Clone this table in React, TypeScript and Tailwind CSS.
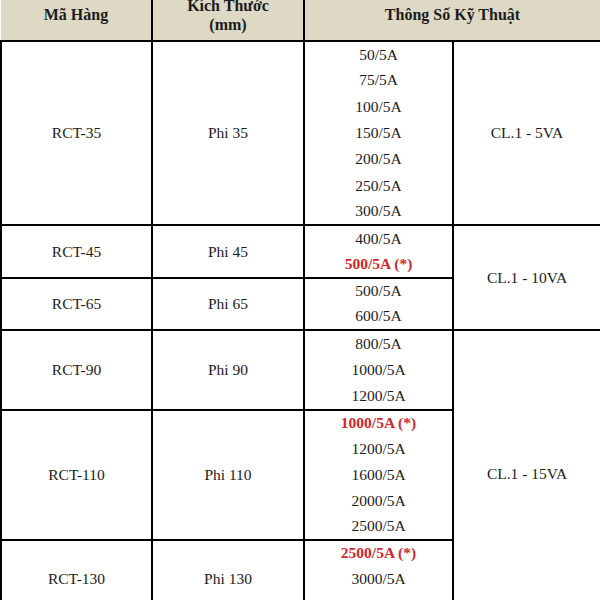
const groups = [
  { code: "RCT-35", size: "Phi 35", row: "h-[26.29px]", specs: ["50/5A", "75/5A", "100/5A", "150/5A", "200/5A", "250/5A", "300/5A"] },
  { code: "RCT-45", size: "Phi 45", row: "h-[26.5px]", specs: ["400/5A", "500/5A (*)"] },
  { code: "RCT-65", size: "Phi 65", row: "h-[26px]", specs: ["500/5A", "600/5A"] },
  { code: "RCT-90", size: "Phi 90", row: "h-[26.67px]", specs: ["800/5A", "1000/5A", "1200/5A"] },
  { code: "RCT-110", size: "Phi 110", row: "h-[26px]", specs: ["1000/5A (*)", "1200/5A", "1600/5A", "2000/5A", "2500/5A"] },
  { code: "RCT-130", size: "Phi 130", row: "h-[26px]", specs: ["2500/5A (*)", "3000/5A", "4000/5A"] },
];

// class groups start at group index -> label + number of product groups covered
const classes: Record<number, { label: string; count: number }> = {
  0: { label: "CL.1 - 5VA", count: 1 },
  1: { label: "CL.1 - 10VA", count: 2 },
  3: { label: "CL.1 - 15VA", count: 3 },
};

const cell = "border-x-2 border-black text-center align-middle";

export default function App() {
  return (
    <div className="w-[600px] h-[600px] overflow-hidden bg-white text-[#1c1c1c] font-['Liberation_Serif','Times_New_Roman',serif]">
      <table className="-mt-[11px] w-[600px] table-fixed border-collapse text-[15.5px]">
        <colgroup>
          <col className="w-[151px]" />
          <col className="w-[152px]" />
          <col className="w-[149px]" />
          <col className="w-[148px]" />
        </colgroup>
        <thead>
          <tr className="h-[52px] bg-[#ddd9c4] text-[16px] leading-[19px]">
            <th className="border-r-2 border-b-2 border-black font-bold">Mã Hàng</th>
            <th className="border-x-2 border-b-2 border-black font-bold">
              Kích Thước
              <br />
              (mm)
            </th>
            <th colSpan={2} className="border-l-2 border-r-2 border-b-2 border-black font-bold">
              Thông Số Kỹ Thuật
            </th>
          </tr>
        </thead>
        <tbody>
          {groups.map((g, gi) => {
            const cls = classes[gi];
            const span = cls
              ? groups.slice(gi, gi + cls.count).reduce((n, x) => n + x.specs.length, 0)
              : 0;
            return g.specs.map((s, i) => {
              const red = s.includes("(*)");
              return (
                <tr key={g.code + s} className={g.row}>
                  {i === 0 && (
                    <>
                      <td rowSpan={g.specs.length} className={`${cell} border-y-2`}>
                        {g.code}
                      </td>
                      <td rowSpan={g.specs.length} className={`${cell} border-y-2`}>
                        {g.size}
                      </td>
                    </>
                  )}
                  <td
                    className={`${cell} leading-[22px] ${i === 0 ? "border-t-2" : ""} ${
                      red ? "font-bold text-[#d3262e]" : ""
                    }`}
                  >
                    {s}
                  </td>
                  {i === 0 && cls && (
                    <td rowSpan={span} className={`${cell} border-y-2`}>
                      {cls.label}
                    </td>
                  )}
                </tr>
              );
            });
          })}
        </tbody>
      </table>
    </div>
  );
}
